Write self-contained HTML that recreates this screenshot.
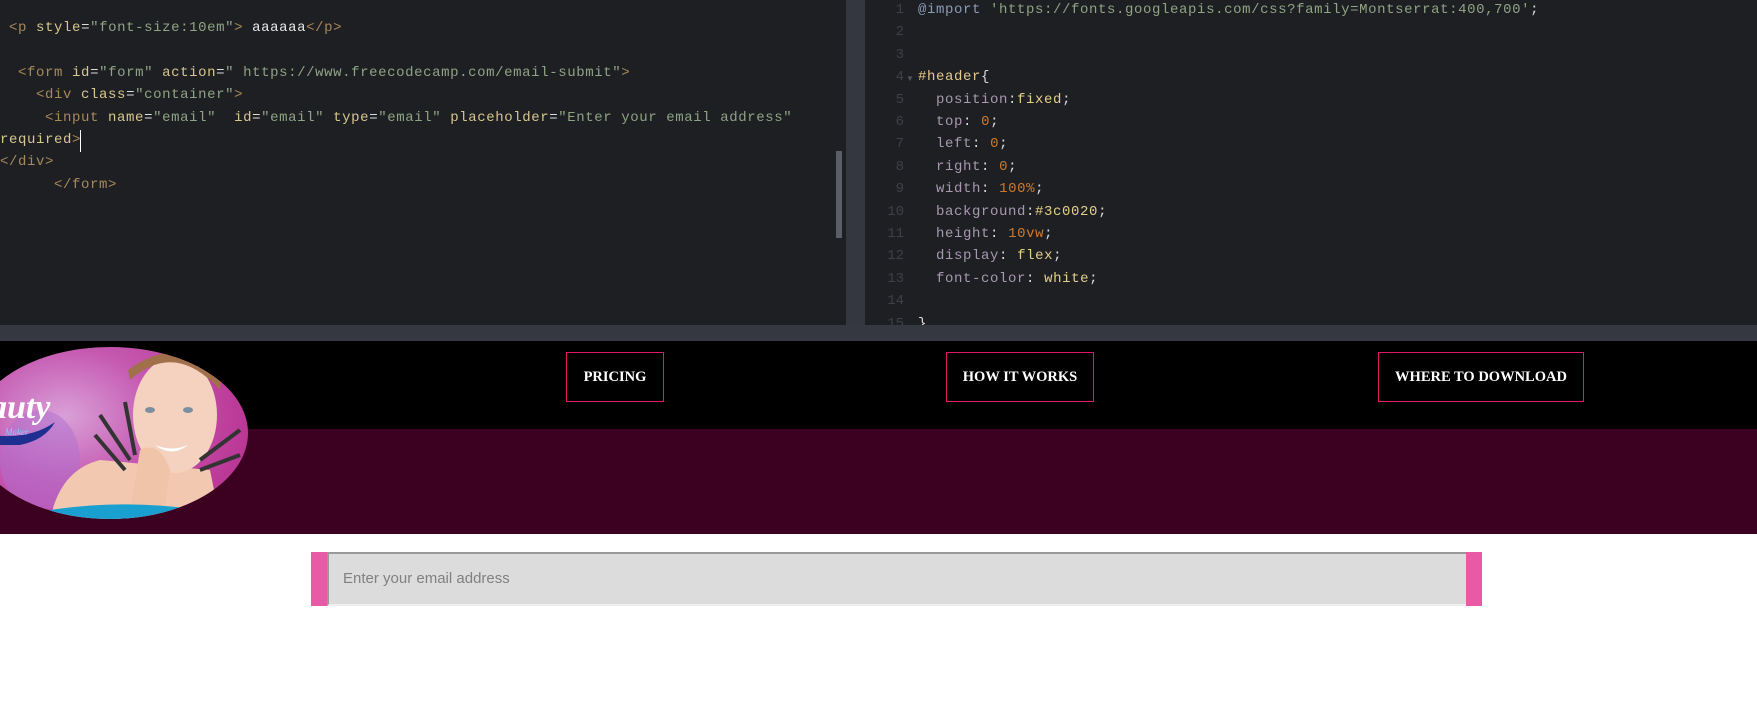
<!DOCTYPE html>
<html><head><meta charset="utf-8"><style>
*{margin:0;padding:0;box-sizing:border-box}
body{width:1757px;height:708px;overflow:hidden;background:#fff;position:relative;font-family:"Liberation Sans",sans-serif}
.pane{position:absolute;top:0;height:325px;background:#1e1f23}
.code{position:absolute;font-family:"Liberation Mono",monospace;font-size:14px;letter-spacing:0.6px;white-space:pre;line-height:22.4px;color:#ccc}
.t{color:#a8895a}.a{color:#d8c78e}.s{color:#8fa385}.w{color:#e8e8e8}.e{color:#ddd}
.k{color:#8a9bb4}.h{color:#e6c98b}.p{color:#a898b0}.v{color:#e5cf8c}.n{color:#cf7a2b}
.ln{position:absolute;left:878px;width:26px;text-align:right;font-family:"Liberation Mono",monospace;font-size:14px;line-height:22.4px;color:#3e4047;white-space:pre}
.btn{position:absolute;top:352px;height:50px;border:1px solid #e0186c;color:#fff;font-family:"Liberation Serif",serif;font-weight:bold;font-size:14.5px;display:flex;align-items:center;justify-content:center}
</style></head><body>
<div class="pane" style="left:0;width:846px"></div>
<div style="position:absolute;left:846px;top:0;width:19px;height:325px;background:#343640"></div>
<div class="pane" style="left:865px;width:892px"></div>
<div style="position:absolute;left:836px;top:151px;width:6px;height:87px;background:#5a5c66"></div>

<div class="code" style="left:0;top:17px"> <span class="t">&lt;p</span> <span class="a">style</span><span class="e">=</span><span class="s">"font-size:10em"</span><span class="t">&gt;</span> <span class="w">aaaaaa</span><span class="t">&lt;/p&gt;</span>

  <span class="t">&lt;form</span> <span class="a">id</span><span class="e">=</span><span class="s">"form"</span> <span class="a">action</span><span class="e">=</span><span class="s">" https://www.freecodecamp.com/email-submit"</span><span class="t">&gt;</span>
    <span class="t">&lt;div</span> <span class="a">class</span><span class="e">=</span><span class="s">"container"</span><span class="t">&gt;</span>
     <span class="t">&lt;input</span> <span class="a">name</span><span class="e">=</span><span class="s">"email"</span>  <span class="a">id</span><span class="e">=</span><span class="s">"email"</span> <span class="a">type</span><span class="e">=</span><span class="s">"email"</span> <span class="a">placeholder</span><span class="e">=</span><span class="s">"Enter your email address"</span>
<span class="a">required</span><span class="t">&gt;</span>
<span class="t">&lt;/div&gt;</span>
      <span class="t">&lt;/form&gt;</span></div>
<div style="position:absolute;left:80px;top:130px;width:1px;height:22px;background:#fff"></div>

<div class="ln" style="top:-1px">1
2
3
4
5
6
7
8
9
10
11
12
13
14
15</div>
<div style="position:absolute;left:906px;top:74px;color:#555;font-size:8px">▼</div>
<div class="code" style="left:918px;top:-1px"><span class="k">@import</span> <span class="s">'https://fonts.googleapis.com/css?family=Montserrat:400,700'</span><span class="e">;</span>


<span class="h">#header</span><span class="e">{</span>
  <span class="p">position</span><span class="e">:</span><span class="v">fixed</span><span class="e">;</span>
  <span class="p">top</span><span class="e">:</span> <span class="n">0</span><span class="e">;</span>
  <span class="p">left</span><span class="e">:</span> <span class="n">0</span><span class="e">;</span>
  <span class="p">right</span><span class="e">:</span> <span class="n">0</span><span class="e">;</span>
  <span class="p">width</span><span class="e">:</span> <span class="n">100%</span><span class="e">;</span>
  <span class="p">background</span><span class="e">:</span><span class="v">#3c0020</span><span class="e">;</span>
  <span class="p">height</span><span class="e">:</span> <span class="n">10vw</span><span class="e">;</span>
  <span class="p">display</span><span class="e">:</span> <span class="v">flex</span><span class="e">;</span>
  <span class="p">font-color</span><span class="e">:</span> <span class="v">white</span><span class="e">;</span>

<span class="e">}</span></div>
<div style="position:absolute;left:0;top:325px;width:1757px;height:16px;background:#363841"></div>

<div style="position:absolute;left:0;top:341px;width:1757px;height:88px;background:#000"></div>
<div style="position:absolute;left:0;top:429px;width:1757px;height:105px;background:#3c0020"></div>

<svg style="position:absolute;left:0;top:340px" width="260" height="190" viewBox="0 0 260 190">
<defs>
<radialGradient id="bg" cx="0.25" cy="0.4" r="0.8"><stop offset="0" stop-color="#d9a0d8"/><stop offset="0.45" stop-color="#c558b0"/><stop offset="1" stop-color="#b82e8e"/></radialGradient>
<clipPath id="c"><ellipse cx="110" cy="93" rx="138" ry="86"/></clipPath>
</defs>
<g clip-path="url(#c)">
<rect width="260" height="190" fill="url(#bg)"/>
<ellipse cx="40" cy="120" rx="40" ry="50" fill="#b070d0" opacity="0.5"/>
<path d="M50 180 Q60 130 100 120 L210 130 L220 180Z" fill="#f2c9b0"/>
<ellipse cx="175" cy="75" rx="42" ry="58" fill="#f4d2bf"/>
<path d="M130 40 Q175 0 220 50 L222 30 Q175 -5 128 30Z" fill="#a0704a"/>
<ellipse cx="150" cy="70" rx="5" ry="3" fill="#7a8fa0"/><ellipse cx="188" cy="70" rx="5" ry="3" fill="#7a8fa0"/>
<path d="M155 105 Q172 118 188 105 Q172 112 155 105Z" fill="#fff"/>
<g stroke="#333" stroke-width="4"><line x1="95" y1="95" x2="125" y2="130"/><line x1="100" y1="75" x2="130" y2="120"/><line x1="125" y1="62" x2="135" y2="115"/><line x1="240" y1="90" x2="200" y2="120"/><line x1="240" y1="115" x2="200" y2="130"/></g>
<path d="M140 110 Q160 100 170 130 L165 170 L130 170Z" fill="#f0c4a8"/>
<path d="M0 180 Q100 155 200 170 L200 190 L0 190Z" fill="#1aa0d0"/>
<path d="M-10 95 Q30 100 55 82 Q45 100 20 105 L-10 105Z" fill="#1f2f90"/>
<text x="-10" y="78" font-family="Liberation Serif,serif" font-style="italic" font-weight="bold" font-size="34" fill="#fff">auty</text>
<text x="5" y="95" font-family="Liberation Serif,serif" font-style="italic" font-size="9" fill="#7fd0ff">Maker</text>
</g>
</svg>

<div class="btn" style="left:566px;width:98px">PRICING</div>
<div class="btn" style="left:946px;width:148px">HOW IT WORKS</div>
<div class="btn" style="left:1378px;width:206px">WHERE TO DOWNLOAD</div>

<div style="position:absolute;left:311px;top:552px;width:16px;height:54px;background:#e85aa5"></div>
<div style="position:absolute;left:1466px;top:552px;width:16px;height:54px;background:#e85aa5"></div>
<div style="position:absolute;left:327px;top:552px;width:1139px;height:54px;background:#dcdcdc;border-top:2px solid #999;border-left:2px solid #999;border-bottom:2px solid #eee"></div>
<div style="position:absolute;left:343px;top:570px;font-size:15px;color:#808080">Enter your email address</div>
</body></html>
